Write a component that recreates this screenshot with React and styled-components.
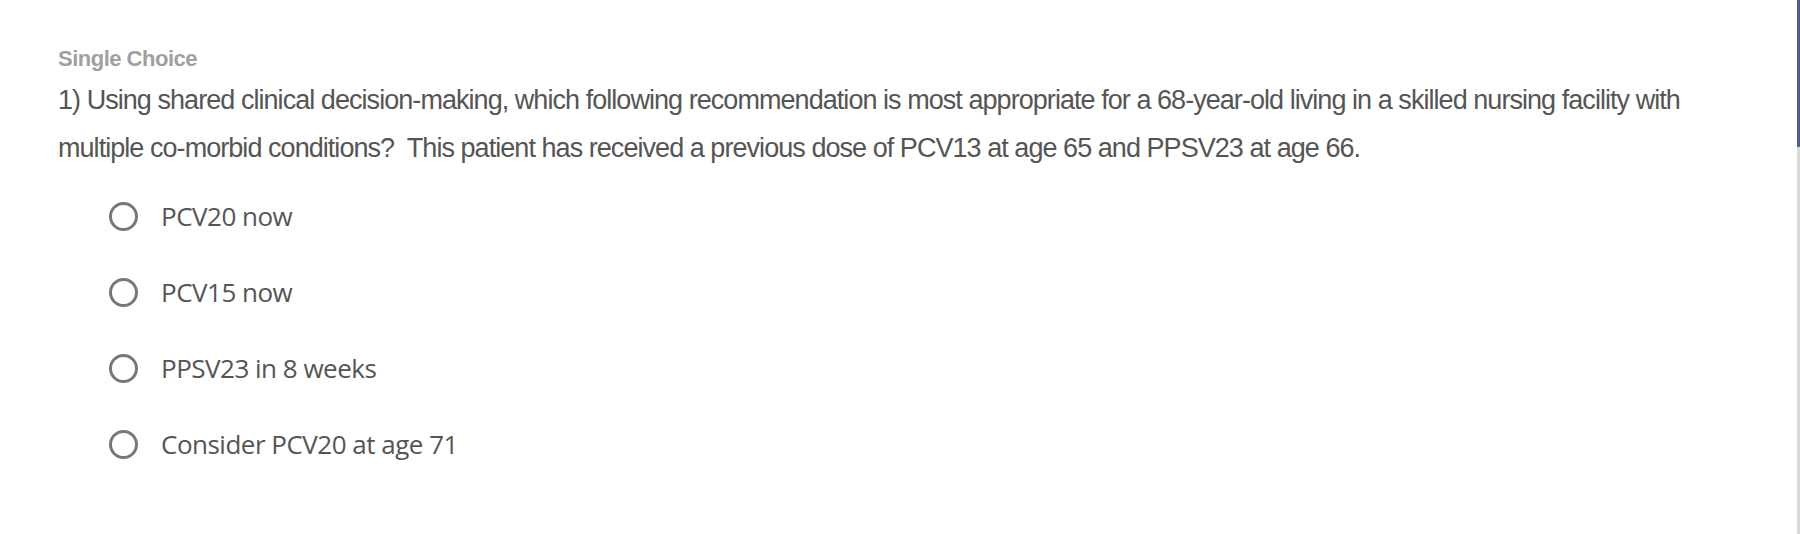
import React from "react";
import styled, { createGlobalStyle } from "styled-components";

const GlobalStyle = createGlobalStyle`
  html, body {
    margin: 0;
    padding: 0;
    background: #ffffff;
  }
`;

const options = [
  "PCV20 now",
  "PCV15 now",
  "PPSV23 in 8 weeks",
  "Consider PCV20 at age 71",
];

const App = () => {
  return (
    <>
      <GlobalStyle />
      <Page>
        <Question>
          <Kind>Single Choice</Kind>
          <Stem>
            1) Using shared clinical decision-making, which following recommendation is most
            appropriate for a 68-year-old living in a skilled nursing facility with multiple
            co-morbid conditions?&nbsp; This patient has received a previous dose of PCV13 at age
            65 and PPSV23 at age 66.
          </Stem>
          <Choices>
            {options.map((text) => (
              <Choice key={text}>
                <Radio type="radio" name="q1" />
                <ChoiceText>{text}</ChoiceText>
              </Choice>
            ))}
          </Choices>
        </Question>
        <ScrollTrack>
          <ScrollThumb />
        </ScrollTrack>
      </Page>
    </>
  );
};

//Styles
const Page = styled.div`
  display: flex;
  height: 534px;
  overflow: hidden;
`;

const Question = styled.div`
  flex: 1;
  padding: 45px 60px 0 58px;
`;

const Kind = styled.div`
  font-family: "Liberation Sans", Arial, sans-serif;
  font-weight: bold;
  font-size: 22px;
  letter-spacing: -0.5px;
  color: #a0a0a0;
  line-height: 28px;
  margin-bottom: 3px;
`;

const Stem = styled.p`
  margin: 0;
  font-family: "Liberation Sans", Arial, sans-serif;
  font-size: 27px;
  letter-spacing: -0.95px;
  line-height: 48px;
  color: #555555;
  max-width: 1660px;
`;

const Choices = styled.div`
  display: flex;
  flex-direction: column;
  gap: 40px;
  padding: 26px 0 0 51px;
`;

const Choice = styled.label`
  display: flex;
  align-items: center;
  gap: 23px;
  height: 36px;
  cursor: pointer;
`;

const Radio = styled.input`
  appearance: none;
  margin: 0;
  width: 29px;
  height: 29px;
  border: 3.5px solid #777777;
  border-radius: 50%;
  box-sizing: border-box;
  flex-shrink: 0;
`;

const ChoiceText = styled.span`
  font-family: "Open Sans", sans-serif;
  font-size: 26px;
  letter-spacing: -0.5px;
  color: #555555;
`;

const ScrollTrack = styled.div`
  width: 3px;
  background: #d9d9d9;
  display: flex;
  flex-direction: column;
`;

const ScrollThumb = styled.div`
  height: 147px;
  background: #4e5d8c;
`;

export default App;
